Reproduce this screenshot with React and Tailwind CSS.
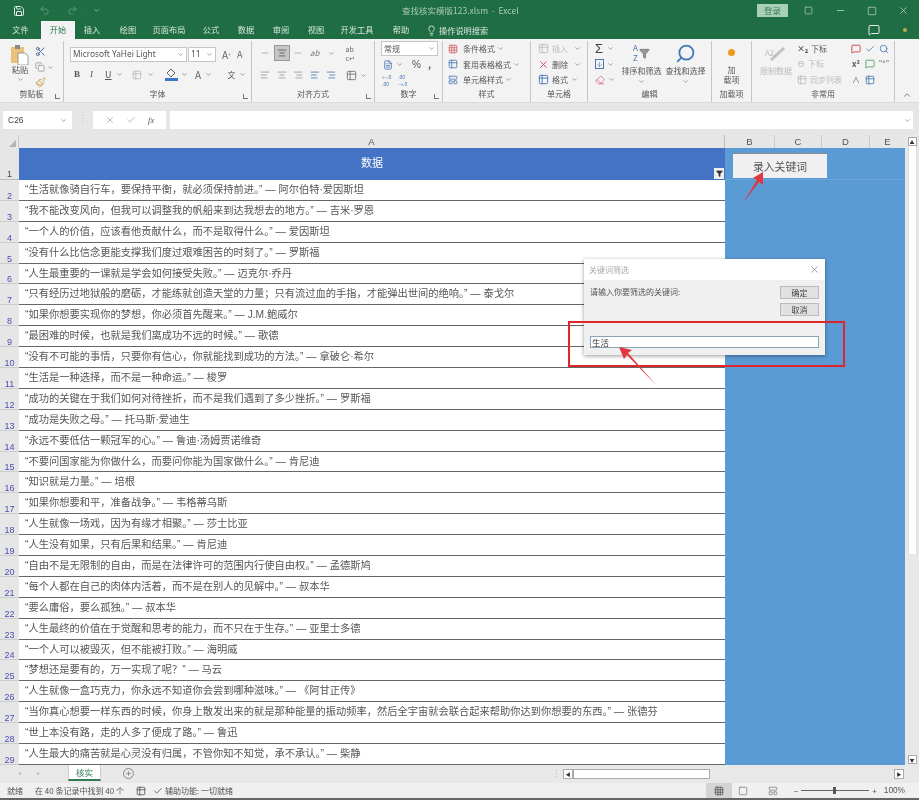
import React from 'react';
import { Save, Undo2, Redo2, Lightbulb, MessageSquare, X, Check, Scissors, Copy, Paintbrush, AlignLeft, AlignCenter, AlignRight, Minus, Square, ChevronDown, ChevronUp, Search, Plus, Grid3x3, Eraser, Filter, Table2, ArrowDown, FileText, LayoutPanelTop } from 'lucide-react';

const CJK = { fontFamily: '"Noto Sans CJK SC","Noto Sans",sans-serif' };
const SHEET = { fontFamily: '"Liberation Sans","Noto Sans CJK SC",sans-serif' };
const rows = [
'“生活就像骑自行车，要保持平衡，就必须保持前进。” — 阿尔伯特·爱因斯坦',
'“我不能改变风向，但我可以调整我的帆船来到达我想去的地方。” — 吉米·罗恩',
'“一个人的价值，应该看他贡献什么，而不是取得什么。” — 爱因斯坦',
'“没有什么比信念更能支撑我们度过艰难困苦的时刻了。” — 罗斯福',
'“人生最重要的一课就是学会如何接受失败。” — 迈克尔·乔丹',
'“只有经历过地狱般的磨砺，才能练就创造天堂的力量；只有流过血的手指，才能弹出世间的绝响。” — 泰戈尔',
'“如果你想要实现你的梦想，你必须首先醒来。” — J.M.鲍威尔',
'“最困难的时候，也就是我们离成功不远的时候。” — 歌德',
'“没有不可能的事情，只要你有信心，你就能找到成功的方法。” — 拿破仑·希尔',
'“生活是一种选择，而不是一种命运。” — 梭罗',
'“成功的关键在于我们如何对待挫折，而不是我们遇到了多少挫折。” — 罗斯福',
'“成功是失败之母。” — 托马斯·爱迪生',
'“永远不要低估一颗冠军的心。” — 鲁迪·汤姆贾诺维奇',
'“不要问国家能为你做什么，而要问你能为国家做什么。” — 肯尼迪',
'“知识就是力量。” — 培根',
'“如果你想要和平，准备战争。” — 韦格蒂乌斯',
'“人生就像一场戏，因为有缘才相聚。” — 莎士比亚',
'“人生没有如果，只有后果和结果。” — 肯尼迪',
'“自由不是无限制的自由，而是在法律许可的范围内行使自由权。” — 孟德斯鸠',
'“每个人都在自己的肉体内活着，而不是在别人的见解中。” — 叔本华',
'“要么庸俗，要么孤独。” — 叔本华',
'“人生最终的价值在于觉醒和思考的能力，而不只在于生存。” — 亚里士多德',
'“一个人可以被毁灭，但不能被打败。” — 海明威',
'“梦想还是要有的，万一实现了呢？” — 马云',
'“人生就像一盒巧克力，你永远不知道你会尝到哪种滋味。” — 《阿甘正传》',
'“当你真心想要一样东西的时候，你身上散发出来的就是那种能量的振动频率，然后全宇宙就会联合起来帮助你达到你想要的东西。” — 张德芬',
'“世上本没有路，走的人多了便成了路。” — 鲁迅',
'“人生最大的痛苦就是心灵没有归属，不管你知不知觉，承不承认。” — 柴静',
];
const tabs = [['文件',41],['开始',34],['插入',34],['绘图',38],['页面布局',44],['公式',40],['数据',30],['审阅',40],['视图',30],['开发工具',52],['帮助',36]];
const Caret = ({ c = '' }) => <ChevronDown size={7} strokeWidth={2} className={'text-[#666] shrink-0 ' + c} />;

function Group({ w, label, launcher, children }) {
  return (
    <div style={{ width: w }} className="h-full shrink-0 flex flex-col border-r border-[#c6c6c6] relative">
      <div className="flex-1 min-h-0">{children}</div>
      <div className="h-[15px] text-[8px] leading-[13px] text-[#555] text-center">{label}</div>
      {launcher && <div className="absolute right-[3px] bottom-[3px] w-[5px] h-[5px] border-l border-b border-[#777]" />}
    </div>
  );
}
const Row = ({ className = '', children }) => <div className={'flex items-center ' + className}>{children}</div>;
const Cell = ({ children, className = '' }) => <div className={'w-[16.5px] h-[16px] flex items-center justify-center shrink-0 ' + className}>{children}</div>;

function Ribbon() {
  return (
    <div className="h-[64px] shrink-0 bg-[#f3f3f3] flex border-b border-[#dcdcdc] text-[#555] pt-[2px]">
      <Group w={64} label="剪贴板" launcher>
        <div className="flex pl-[9px] pt-[4px] gap-[2px]">
          <div className="flex flex-col items-center w-[22px]">
            <svg width="20" height="20" viewBox="0 0 20 20" className="shrink-0"><rect x="1" y="2" width="13" height="16" fill="#e8c27a"/><rect x="5" y="0" width="5" height="4" fill="#8a8a8a"/><path d="M8 8h7l3 3v9H8z" fill="#fff" stroke="#888" strokeWidth="0.8"/></svg>
            <span className="text-[8.3px] leading-[11px] whitespace-nowrap mt-[-1px]">粘贴</span>
            <Caret c="mt-[1px]" />
          </div>
          <div className="flex flex-col gap-[5px] items-start pt-[1px] pl-[2px]">
            <Scissors size={11} className="text-[#44659a]" />
            <Row className="gap-[2px]"><Copy size={10} className="text-[#999]" /><Caret /></Row>
            <Paintbrush size={11} className="text-[#c9a255]" />
          </div>
        </div>
      </Group>
      <Group w={188} label="字体" launcher>
        <div className="pl-[6px] pt-[6px]">
          <Row className="gap-[1px]">
            <div className="w-[117px] h-[15px] bg-white border border-[#c6c6c6] flex items-center justify-between px-[2px] text-[8.3px]" style={{ fontFamily: '"Noto Sans",sans-serif' }}>
              <span className="whitespace-nowrap">Microsoft YaHei Light</span><Caret />
            </div>
            <div className="w-[28px] h-[15px] bg-white border border-[#c6c6c6] flex items-center justify-between px-[2px] text-[8.5px]" style={{ fontFamily: '"Noto Sans",sans-serif' }}>
              <span>11</span><Caret />
            </div>
            <span className="ml-[5px] text-[10px] leading-none text-[#666]">A<sup className="text-[5px]">+</sup></span>
            <span className="ml-[5px] text-[9px] leading-none text-[#666]">A<sup className="text-[5px]">-</sup></span>
          </Row>
          <Row className="mt-[6px] pl-[4px] text-[9px] leading-none" >
            <b className="w-[16px]" style={{ fontFamily: '"Liberation Serif",serif' }}>B</b>
            <i className="w-[15px]" style={{ fontFamily: '"Liberation Serif",serif' }}>I</i>
            <u className="w-[11px]">U</u><Caret c="mr-[9px]" />
            <Table2 size={10} className="text-[#bbb] mr-[5px]" /><Caret c="mr-[11px]" />
            <svg width="13" height="13" viewBox="0 0 13 13" className="mr-[3px]"><path d="M6 1l4 4-4 4-4-4z" fill="none" stroke="#666"/><rect x="0" y="10" width="13" height="3" fill="#3b77c8"/></svg><Caret c="mr-[7px]" />
            <span className="mr-[4px] text-[10px] text-[#666]">A</span><Caret c="mr-[14px]" />
            <span className="text-[8px] leading-[9px] w-[11px] mr-[2px] text-center">文</span><Caret />
          </Row>
        </div>
      </Group>
      <Group w={123} label="对齐方式" launcher>
        <div className="pl-[5px] pt-[4px] flex">
          <div className="w-[82.5px]">
            <Row className="h-[16px]">
              <Cell><Minus size={10} className="text-[#aaa]" /></Cell>
              <Cell className="bg-[#c6c6c6] border border-[#999]"><AlignCenter size={10} /></Cell>
              <Cell><Minus size={10} className="text-[#aaa]" /></Cell>
              <Cell><span className="text-[8px] italic text-[#777]">ab</span></Cell>
              <Cell><Caret /></Cell>
            </Row>
            <Row className="h-[16px] mt-[6px]">
              <Cell><AlignLeft size={10} className="text-[#999]" /></Cell>
              <Cell><AlignCenter size={10} className="text-[#999]" /></Cell>
              <Cell><AlignRight size={10} className="text-[#999]" /></Cell>
              <Cell><AlignLeft size={10} className="text-[#4a78b5]" /></Cell>
              <Cell><AlignRight size={10} className="text-[#4a78b5]" /></Cell>
            </Row>
          </div>
          <div className="ml-[6px] flex flex-col">
            <span className="h-[18px] text-[7px] leading-[9px] text-[#666]">ab<br />c↵</span>
            <Row className="mt-[4px] h-[16px] gap-[3px]"><Table2 size={11} className="text-[#777]" /><Caret /></Row>
          </div>
        </div>
      </Group>
      <Group w={68} label="数字" launcher>
        <div className="pl-[6px]">
          <div className="w-[57px] h-[15px] bg-white border border-[#c6c6c6] flex items-center justify-between px-[2px] text-[8px]"><span>常规</span><Caret /></div>
          <Row className="mt-[1px] pl-[2px] h-[15px]">
            <FileText size={10} className="text-[#4a78b5] mr-[3px]" /><Caret c="mr-[9px]" />
            <span className="text-[10px] leading-none w-[16px]" style={{ fontFamily: '"Liberation Sans",sans-serif' }}>%</span>
            <b className="text-[9px] leading-none">,</b>
          </Row>
          <Row className="gap-[2px] pl-[1px] text-[5px] leading-[7px] text-[#4a78b5] h-[15px]" >
            <span className="block w-[14px]">←.0<br />.00</span><span className="block w-[14px]">.00<br />→.0</span>
          </Row>
        </div>
      </Group>
      <Group w={88} label="样式">
        <div className="pl-[5px] text-[8px] leading-[15px] whitespace-nowrap">
          <Row className="gap-[2px] h-[15.5px]"><Grid3x3 size={10} className="text-[#c66]" /><span className="ml-[3px]">条件格式</span><Caret /></Row>
          <Row className="gap-[2px] h-[15.5px]"><Table2 size={10} className="text-[#4a78b5]" /><span className="ml-[3px]">套用表格格式</span><Caret /></Row>
          <Row className="gap-[2px] h-[15.5px]"><LayoutPanelTop size={10} className="text-[#4a78b5]" /><span className="ml-[3px]">单元格样式</span><Caret /></Row>
        </div>
      </Group>
      <Group w={57} label="单元格">
        <div className="pl-[7px] text-[8px] leading-[15px] whitespace-nowrap">
          <Row className="gap-[3px] h-[15.5px] text-[#bbb]"><Table2 size={11} /><span>插入</span><Caret c="ml-[3px]" /></Row>
          <Row className="gap-[3px] h-[15.5px]"><X size={11} className="text-[#c44]" /><span>删除</span><Caret c="ml-[3px]" /></Row>
          <Row className="gap-[3px] h-[15.5px]"><Table2 size={11} className="text-[#4a78b5]" /><span>格式</span><Caret /></Row>
        </div>
      </Group>
      <Group w={124} label="编辑">
        <div className="flex pl-[7px]">
          <div className="w-[26px]">
            <Row className="h-[15.5px] gap-[2px]"><span className="text-[13px] leading-none text-[#444]" style={{ fontFamily: '"Liberation Sans",sans-serif' }}>Σ</span><Caret c="ml-[2px]" /></Row>
            <Row className="h-[15.5px] gap-[3px]"><div className="w-[9px] h-[10px] border border-[#4a78b5] flex items-center justify-center"><ArrowDown size={7} className="text-[#4a78b5]" /></div><Caret /></Row>
            <Row className="h-[15.5px] gap-[3px]"><Eraser size={10} className="text-[#d96a8c]" /><Caret /></Row>
          </div>
          <div className="w-[41px] flex flex-col items-center text-[8px] leading-[12px]">
            <div className="h-[24px] flex items-center shrink-0 gap-[1px]">
              <span className="text-[8px] leading-[10px] text-[#4a6fb0]">A<br />Z</span><Filter size={11} className="text-[#777] fill-[#999]" />
            </div>
            <span className="whitespace-nowrap">排序和筛选</span><Caret c="mt-[1px]" />
          </div>
          <div className="w-[41px] ml-[3px] flex flex-col items-center text-[8px] leading-[12px]">
            <div className="h-[24px] flex items-center shrink-0"><Search size={21} className="text-[#3f78b8] -scale-x-100" /></div>
            <span className="whitespace-nowrap">查找和选择</span><Caret c="mt-[1px]" />
          </div>
        </div>
      </Group>
      <Group w={40} label="加载项">
        <div className="flex flex-col items-center text-[8px] leading-[10px] pt-[8px]">
          <span className="w-[7px] h-[7px] rounded-full bg-[#f09a1c] mb-[9px]" />
          <span>加</span><span>载项</span>
        </div>
      </Group>
      <Group w={143} label="非常用">
        <div className="flex pl-[7px] text-[8px]">
          <div className="w-[34px] flex flex-col items-center text-[#bbb] leading-[12px]">
            <svg width="22" height="20" viewBox="0 0 22 20" className="mt-[4px] shrink-0"><path d="M6 15L19 3" stroke="#c0c0c0" strokeWidth="3"/><text x="0" y="11" fontSize="8" fill="#bbb">A2</text></svg>
            <span className="whitespace-nowrap">限制数据</span>
          </div>
          <div className="w-[52px] ml-[4px] whitespace-nowrap">
            <Row className="h-[15.5px] gap-[3px]"><b>×₂</b><span>下标</span></Row>
            <Row className="h-[15.5px] gap-[3px] text-[#bbb]"><b>⊖</b><span>下标</span></Row>
            <Row className="h-[15.5px] gap-[3px] text-[#bbb]"><Table2 size={10} /><span>同步列表</span></Row>
          </div>
          <div className="grid grid-cols-3 w-[42px] self-start">
            <Row className="h-[15.5px] justify-center"><MessageSquare size={10} className="text-[#c33]" /></Row>
            <Row className="h-[15.5px] justify-center"><Check size={10} className="text-[#4a78b5]" /></Row>
            <Row className="h-[15.5px] justify-center"><Search size={10} className="text-[#4a78b5]" /></Row>
            <Row className="h-[15.5px] justify-center"><b>x²</b></Row>
            <Row className="h-[15.5px] justify-center"><MessageSquare size={10} className="text-[#4a9a5a]" /></Row>
            <Row className="h-[15.5px] justify-center text-[#777]">“*”</Row>
            <Row className="h-[15.5px] justify-center text-[#666]">∧</Row>
            <Row className="h-[15.5px] justify-center"><Table2 size={10} className="text-[#4a78b5]" /></Row>
          </div>
        </div>
      </Group>
      <div className="flex-1 flex items-end justify-center pb-[2px]"><ChevronUp size={10} className="text-[#666]" /></div>
    </div>
  );
}

export default function App() {
  return (
    <div style={CJK} className="w-[919px] h-[800px] overflow-hidden relative flex flex-col bg-[#e6e6e6] text-[#444] blur-[0.35px]">
      {/* title */}
      <div className="h-[21px] shrink-0 bg-[#1f6e43] flex items-center text-[#a9c8b6]">
        <Save size={12} className="ml-[13px] shrink-0 text-[#e3eee8]" />
        <Undo2 size={11} className="ml-[14px] shrink-0 text-[#5f9a7b]" />
        <Caret c="ml-[2px] text-[#5f9a7b]" />
        <Redo2 size={11} className="ml-[8px] shrink-0 text-[#5f9a7b]" />
        <Caret c="ml-[2px] text-[#5f9a7b]" />
        <Caret c="ml-[6px] text-[#cfe0d6]" />
        <span className="ml-[302px] w-[117px] shrink-0 text-[8.5px] whitespace-nowrap">查找核实模版123.xlsm&nbsp; -&nbsp; Excel</span>
        <span className="ml-[238px] w-[31px] h-[13px] shrink-0 bg-[#a8d0b8] text-[#3d7a58] text-[8.5px] leading-[13px] text-center">登录</span>
        <Square size={9} className="ml-[16px] shrink-0" />
        <Minus size={11} className="ml-[22px] shrink-0" />
        <Square size={10} className="ml-[21px] shrink-0" />
        <X size={11} className="ml-[21px] shrink-0" />
      </div>
      {/* tabs */}
      <div className="h-[18px] shrink-0 bg-[#1f6e43] flex items-stretch text-[8.2px] text-[#d7e6dd]">
        {tabs.map(([t, w], i) => (
          <div key={t} style={{ width: w }} className={'text-center leading-[17px] shrink-0 ' + (i === 1 ? 'bg-[#f3f3f3] text-[#2f7a52]' : '')}>{t}</div>
        ))}
        <Row className="ml-[7px] gap-[2px] w-[64px] shrink-0 whitespace-nowrap"><Lightbulb size={11} className="shrink-0" /><span>操作说明搜索</span></Row>
        <MessageSquare size={12} className="ml-[378px] mt-[3px] shrink-0 text-[#e3eee8]" />
        <span className="ml-[23px] mt-[7px] w-[4px] h-[4px] shrink-0 rounded-full bg-[#c2a94a]" />
      </div>
      <Ribbon />
      {/* formula bar */}
      <div className="h-[32px] shrink-0 bg-[#e6e6e6] flex items-start pt-[8px] pl-[3px] text-[8.5px]" style={{ fontFamily: '"Liberation Sans",sans-serif' }}>
        <div className="w-[69px] h-[18px] bg-white flex items-center justify-between px-[5px]"><span>C26</span><Caret /></div>
        <div className="w-[21px] text-center text-[#bbb] leading-[16px]">⋮</div>
        <div className="w-[73px] h-[18px] bg-white flex items-center justify-around px-[6px] text-[#aaa]">
          <X size={10} /><Check size={10} /><i className="text-[#555]" style={{ fontFamily: '"Liberation Serif",serif' }}>fx</i>
        </div>
        <div className="ml-[4px] w-[743px] h-[18px] bg-white flex items-center justify-end pr-[2px]"><Caret /></div>
      </div>
      {/* sheet */}
      <div className="flex-1 min-h-0 flex">
        <div className="flex-1 min-w-0 flex flex-col">
          <div className="h-[13px] shrink-0 flex text-[9.5px] leading-[13px] text-[#555] bg-[#e6e6e6]" style={{ fontFamily: '"Liberation Sans",sans-serif' }}>
            <div className="w-[19px] border-r border-[#ccc] relative"><span className="absolute right-[2px] bottom-[1px] w-0 h-0 border-l-[7px] border-l-transparent border-b-[7px] border-b-[#b5b5b5]" /></div>
            <div className="w-[706px] text-center border-r border-[#bbb]">A</div>
            <div className="w-[50px] text-center border-r border-[#ccc]">B</div>
            <div className="w-[47px] text-center border-r border-[#ccc]">C</div>
            <div className="w-[48px] text-center border-r border-[#ccc]">D</div>
            <div className="w-[35px] text-center">E</div>
          </div>
          <div className="flex-1 min-h-0 flex">
            <div className="w-[725px] shrink-0 flex flex-col">
              <div className="h-[32px] shrink-0 flex">
                <div className="w-[19px] bg-[#e6e6e6] border-b border-[#bbb] text-[9px] leading-[9px] text-[#444] flex items-end justify-center" style={{ fontFamily: '"Liberation Sans",sans-serif' }}>1</div>
                <div className="flex-1 bg-[#4472c4] relative flex items-center justify-center text-[11px] text-white pb-[3px]">
                  数据
                  <div className="absolute right-[1px] bottom-[1px] w-[10px] h-[11px] bg-[#eee] flex items-center justify-center"><Filter size={7} className="text-[#333] fill-[#333]" /></div>
                </div>
              </div>
              {rows.map((t, i) => (
                <div key={i} className="h-[20.9px] shrink-0 flex">
                  <div className="w-[19px] bg-[#e6e6e6] border-b border-[#ccc] text-[9px] leading-[7px] text-[#4a4fb0] flex items-end justify-center" style={{ fontFamily: '"Liberation Sans",sans-serif' }}>{i + 2}</div>
                  <div style={SHEET} className="flex-1 bg-white border-b border-[#666] pl-[6px] text-[10.25px] leading-[20px] text-[#555] whitespace-nowrap overflow-hidden">{t}</div>
                </div>
              ))}
            </div>
            <div className="w-[180px] shrink-0 bg-[#5b9bd5]"><div className="h-[32px] border-b border-[#6aa3d6]" /></div>
          </div>
        </div>
        <div className="w-[14px] shrink-0 bg-[#e8e8e8] flex flex-col items-center pt-[2px] pb-[1px]">
          <div className="w-[9px] h-[9px] bg-white border border-[#aaa] text-[5px] leading-[7px] text-center text-[#333]">▲</div>
          <div className="w-[9px] h-[408px] bg-white border-x border-[#ddd]" />
          <div className="flex-1" />
          <div className="w-[9px] h-[9px] bg-white border border-[#aaa] text-[5px] leading-[7px] text-center text-[#333]">▼</div>
        </div>
      </div>
      {/* sheet tabs */}
      <div className="h-[18px] shrink-0 bg-[#e8e8e8] flex items-start text-[8.5px]">
        <span className="ml-[18px] mt-[4px] text-[6px] leading-[8px] text-[#bbb]">◂</span>
        <span className="ml-[16px] mt-[4px] text-[6px] leading-[8px] text-[#bbb]">▸</span>
        <div className="ml-[28px] w-[33px] h-[16px] bg-white border-x border-[#ccc] border-b-2 border-b-[#2f7a52] text-center leading-[14px] text-[#2f7a52]">核实</div>
        <div className="ml-[22px] mt-[3px] w-[11px] h-[11px] rounded-full border border-[#888] flex items-center justify-center"><Plus size={7} className="text-[#666]" /></div>
        <span className="ml-[418px] mt-[1px] w-[4px] text-[#bbb] leading-[14px]">⋮</span>
        <div className="ml-[7px] mt-[4px] w-[10px] h-[10px] bg-white border border-[#aaa] text-[5px] leading-[8px] text-center text-[#333]">◀</div>
        <div className="mt-[4px] w-[137px] h-[10px] bg-white border border-[#aaa]" />
        <div className="ml-[184px] mt-[4px] w-[10px] h-[10px] bg-white border border-[#aaa] text-[5px] leading-[8px] text-center text-[#333]">▶</div>
      </div>
      {/* status */}
      <div className="h-[15px] shrink-0 bg-[#f0f0f0] flex items-center text-[8px] text-[#555] whitespace-nowrap pr-[14px]">
        <span className="ml-[7px]">就绪</span>
        <span className="ml-[12px]">在 40 条记录中找到 40 个</span>
        <Table2 size={10} className="ml-[12px] shrink-0" />
        <Check size={10} className="ml-[7px] shrink-0" />
        <span className="ml-[2px]">辅助功能: 一切就绪</span>
        <div className="ml-auto w-[26px] h-[15px] bg-[#d4d4d4] flex items-center justify-center"><Grid3x3 size={10} /></div>
        <Square size={10} className="ml-[6px] shrink-0 text-[#888]" />
        <LayoutPanelTop size={10} className="ml-[20px] shrink-0 text-[#888]" />
        <span className="ml-[16px] leading-none">−</span>
        <div className="ml-[3px] w-[68px] h-[1px] bg-[#666] relative"><span className="absolute left-[32px] -top-[3px] w-[3px] h-[7px] bg-[#555]" /></div>
        <span className="ml-[3px] leading-none">+</span>
        <span className="ml-[7px] text-[8.3px]" style={{ fontFamily: '"Liberation Sans",sans-serif' }}>100%</span>
      </div>
      <div className="h-[2px] shrink-0 bg-[#666]" />

      {/* floating sheet button */}
      <div className="absolute left-[733px] top-[153px] w-[94px] h-[25px] bg-[#f0f0f0] border-t border-[#888] text-[10.8px] leading-[24px] text-center text-[#555]">录入关键词</div>

      {/* dialog */}
      <div className="absolute left-[584px] top-[259px] w-[241px] h-[96px] bg-[#f0f0f0] shadow-[0_1px_4px_rgba(0,0,0,0.4)] flex flex-col">
        <div className="h-[21px] bg-white flex items-center justify-between pl-[5px] pr-[5px] text-[8px] text-[#aaa]">
          <span>关键词筛选</span><X size={11} className="text-[#999]" />
        </div>
        <div className="flex-1 flex flex-col px-[6px]">
          <div className="flex justify-between">
            <span className="mt-[5px] text-[8px] leading-[14px] text-[#555]">请输入你要筛选的关键词:</span>
            <div className="flex flex-col gap-[4px] mt-[6px]">
              <div className="w-[39px] h-[13px] bg-[#e1e1e1] border border-[#bbb] text-[8px] leading-[11px] text-center text-[#444]">确定</div>
              <div className="w-[39px] h-[13px] bg-[#e1e1e1] border border-[#bbb] text-[8px] leading-[11px] text-center text-[#444]">取消</div>
            </div>
          </div>
          <div className="mt-[20px] w-[229px] h-[12px] bg-white border border-[#8aa2b8] text-[8.5px] leading-[10px] pl-[1px] text-[#333]">生活</div>
        </div>
      </div>

      {/* annotations */}
      <div className="absolute left-[568px] top-[321px] w-[277px] h-[46px] border-2 border-[#e0262b]" />
      <svg className="absolute left-[730px] top-[165px]" width="40" height="45" viewBox="0 0 40 45">
        <path d="M13 38 L27 15 L23 13 L33 7 L33 20 L29 17 Z" fill="#e0383c" />
      </svg>
      <svg className="absolute left-[610px] top-[340px]" width="50" height="50" viewBox="0 0 50 50">
        <path d="M47 46 L17 15 L14 19 L9 7 L22 10 L18 13 Z" fill="#e0383c" />
      </svg>
    </div>
  );
}
